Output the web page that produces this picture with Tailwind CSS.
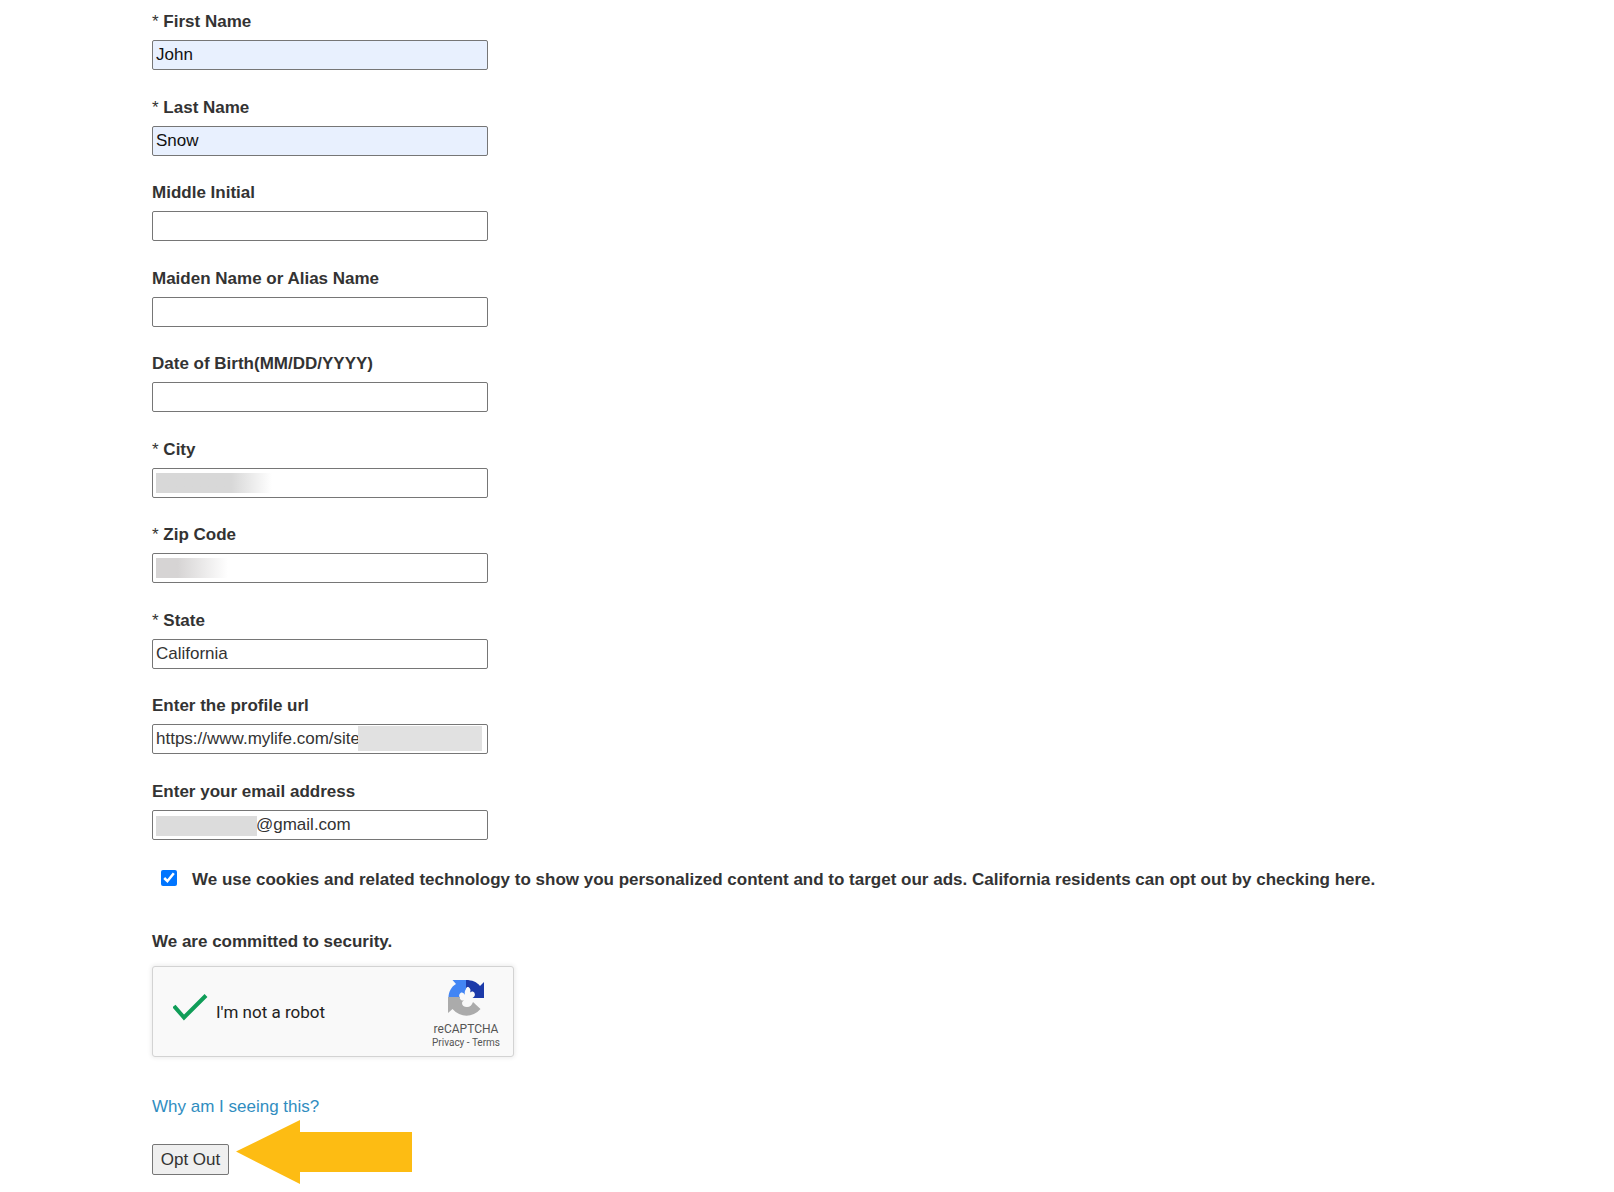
<!DOCTYPE html>
<html lang="en">
<head>
  <meta charset="UTF-8">
  <meta name="viewport" content="width=device-width, initial-scale=1.0">
  <title>Opt Out</title>
  <script src="https://cdn.jsdelivr.net/npm/@tailwindcss/browser@4"></script>
</head>
<body class="bg-white font-['Liberation_Sans',Arial,sans-serif] text-[17px] leading-5 text-[#333]">
  <main class="pl-[152px] pr-8 pt-3 pb-4">
    <form>
      <!-- Personal details -->
      <div>
        <div class="w-84 odd:mb-7 even:mb-[27px]">
          <label for="firstName" class="mb-2 block font-bold"><span class="font-normal">*</span> First Name</label>
          <input id="firstName" type="text" value="John" class="block h-[30px] w-full rounded-xs border border-[#767676] bg-[#e8f0fe] px-[3px] text-[#111]">
        </div>
        <div class="w-84 odd:mb-7 even:mb-[27px]">
          <label for="lastName" class="mb-2 block font-bold"><span class="font-normal">*</span> Last Name</label>
          <input id="lastName" type="text" value="Snow" class="block h-[30px] w-full rounded-xs border border-[#767676] bg-[#e8f0fe] px-[3px] text-[#111]">
        </div>
        <div class="w-84 odd:mb-7 even:mb-[27px]">
          <label for="middleInitial" class="mb-2 block font-bold">Middle Initial</label>
          <input id="middleInitial" type="text" class="block h-[30px] w-full rounded-xs border border-[#767676] px-[3px]">
        </div>
        <div class="w-84 odd:mb-7 even:mb-[27px]">
          <label for="alias" class="mb-2 block font-bold">Maiden Name or Alias Name</label>
          <input id="alias" type="text" class="block h-[30px] w-full rounded-xs border border-[#767676] px-[3px]">
        </div>
        <div class="w-84 odd:mb-7 even:mb-[27px]">
          <label for="dob" class="mb-2 block font-bold">Date of Birth(MM/DD/YYYY)</label>
          <input id="dob" type="text" class="block h-[30px] w-full rounded-xs border border-[#767676] px-[3px]">
        </div>
        <div class="w-84 odd:mb-7 even:mb-[27px]">
          <label for="city" class="mb-2 block font-bold"><span class="font-normal">*</span> City</label>
          <div class="relative">
            <input id="city" type="text" class="block h-[30px] w-full rounded-xs border border-[#767676] px-[3px]">
            <div class="absolute left-1 top-[5px] h-5 w-[116px] bg-linear-to-r from-[#d8d8d8] from-65% to-white"></div>
          </div>
        </div>
        <div class="w-84 odd:mb-7 even:mb-[27px]">
          <label for="zip" class="mb-2 block font-bold"><span class="font-normal">*</span> Zip Code</label>
          <div class="relative">
            <input id="zip" type="text" class="block h-[30px] w-full rounded-xs border border-[#767676] px-[3px]">
            <div class="absolute left-1 top-[5px] h-5 w-[72px] bg-linear-to-r from-[#d6d4d4] from-30% to-white"></div>
          </div>
        </div>
        <div class="w-84 odd:mb-7 even:mb-[27px]">
          <label for="state" class="mb-2 block font-bold"><span class="font-normal">*</span> State</label>
          <input id="state" type="text" value="California" class="block h-[30px] w-full rounded-xs border border-[#767676] px-[3px]">
        </div>
        <div class="w-84 odd:mb-7 even:mb-[27px]">
          <label for="profileUrl" class="mb-2 block font-bold">Enter the profile url</label>
          <div class="relative">
            <input id="profileUrl" type="text" value="https://www.mylife.com/site" class="block h-[30px] w-full rounded-xs border border-[#767676] px-[3px]">
            <div class="absolute right-[6px] top-[2px] h-[25px] w-[124px] bg-[#e1e1e1]"></div>
          </div>
        </div>
        <div class="w-84 odd:mb-7 even:mb-[27px]">
          <label for="email" class="mb-2 block font-bold">Enter your email address</label>
          <div class="relative">
            <input id="email" type="text" value="@gmail.com" class="block h-[30px] w-full rounded-xs border border-[#767676] pl-[103px] pr-[3px]">
            <div class="absolute left-1 top-[6px] h-5 w-[101px] bg-[#dcdcdc]"></div>
          </div>
        </div>
      </div>

      <!-- Cookie consent -->
      <div class="flex items-start pl-[9px]">
        <input id="cookies" type="checkbox" checked class="mt-[3px] size-4 shrink-0">
        <label for="cookies" class="pl-[15px] pt-[3px] font-bold">We use cookies and related technology to show you personalized content and to target our ads. California residents can opt out by checking here.</label>
      </div>

      <h2 class="mt-[42px] font-bold">We are committed to security.</h2>

      <!-- Captcha -->
      <div class="mt-[14px] flex h-[91px] w-[362px] justify-between rounded-[3px] border border-[#d3d3d3] bg-[#f9f9f9] pl-5 pr-[13px] font-[Roboto,sans-serif] shadow-[0_0_4px_1px_rgba(0,0,0,0.08)]">
        <div class="flex items-center gap-2">
          <svg class="mb-2 h-7 w-[35px]" viewBox="0 0 35 28" fill="none" stroke="#0f9d58" stroke-width="4">
            <path d="M1 12l10 11.500L33 1.500"/>
          </svg>
          <span class="text-[17px] text-[#222]">I'm not a robot</span>
        </div>
        <div class="flex flex-col items-center pt-[13px] text-[#555]">
          <svg class="size-9" viewBox="4 4 36 36">
            <path fill="#1c3aa9" d="M22 4C28 4 33 6 36 10l4-4v16H28.500c2-1 3-3 2-5s-3-2-4.500-.5c1-2 .5-4-1-5s-2.500 0-3 1z"/>
            <path fill="#4285f4" d="M22 4H8.500l3.500 4C7 11 4.500 16 4.500 22H16c-1.500-2-1-4 .5-5s3.500 0 4.500 2c-.5-2-.5-4 1-6z"/>
            <path fill="#ababab" d="M4 21v16l4.500-4c8 9 20 9 28 0L29 26c-1 3-3 5-6 5-3 0-5-1.500-5-4 0-1 1-2 2-2.500-2 .5-4-.5-4.500-3.500z"/>
          </svg>
          <span class="mt-[5px] text-xs leading-4">reCAPTCHA</span>
          <span class="text-[10px] leading-3"><a href="#">Privacy</a> - <a href="#">Terms</a></span>
        </div>
      </div>

      <a href="#" class="mt-10 inline-block text-[#318dbf]">Why am I seeing this?</a>

      <!-- Submit with pointer arrow -->
      <div class="flex items-start gap-[7px] pt-[3px]">
        <button type="submit" class="mt-6 h-[31px] w-[77px] rounded-xs border border-[#767676] bg-[#efefef]">Opt Out</button>
        <svg class="h-16 w-44" viewBox="0 0 176 64">
          <path fill="#fdbc13" d="M0 31.500L64 0v12h112v40H64v12z"/>
        </svg>
      </div>
    </form>
  </main>
</body>
</html>
